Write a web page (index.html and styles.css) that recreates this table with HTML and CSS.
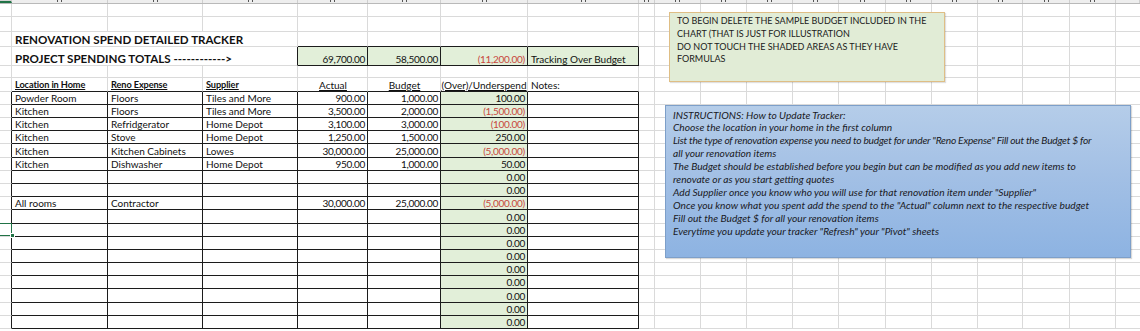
FILE: index.html
```html
<!DOCTYPE html>
<html lang="en">
<head>
<meta charset="utf-8">
<title>Renovation Spend Detailed Tracker</title>
<link rel="stylesheet" href="styles.css">
</head>
<body>
<div class="sheet">
  <div class="colhead">
    <div class="ch on"></div>
    <div class="ch mk"></div><div class="ch mk"></div><div class="ch mk"></div><div class="ch mk"></div>
    <div class="ch mk"></div><div class="ch mk"></div><div class="ch mk"></div><div class="ch mk"></div>
    <div class="ch mk"></div><div class="ch mk"></div><div class="ch mk"></div><div class="ch mk"></div>
    <div class="ch mk"></div><div class="ch mk"></div><div class="ch mk"></div><div class="ch mk"></div>
    <div class="ch mk"></div><div class="ch mk"></div><div class="ch"></div>
  </div>

  <div class="grid">
    <!-- row 1 -->
    <div class="c"></div><div class="c"></div><div class="c"></div><div class="c"></div><div class="c"></div><div class="c"></div><div class="c"></div><div class="c"></div><div class="c rest"></div>
    <!-- row 2 -->
    <div class="c"></div><div class="c"></div><div class="c"></div><div class="c"></div><div class="c"></div><div class="c"></div><div class="c"></div><div class="c"></div><div class="c rest"></div>
    <!-- row 3: title -->
    <div class="c"></div><div class="c span3 title">RENOVATION SPEND DETAILED TRACKER</div><div class="c tb"></div><div class="c tb"></div><div class="c tb"></div><div class="c tb"></div><div class="c rest"></div>
    <!-- row 4: totals -->
    <div class="c"></div><div class="c span3 title trt">PROJECT SPENDING TOTALS ------------&gt;</div><div class="c t g num">69,700.00</div><div class="c t g num">58,500.00</div><div class="c t g num neg">(11,200.00)</div><div class="c t g">Tracking Over Budget</div><div class="c rest"></div>
    <!-- row 5 -->
    <div class="c"></div><div class="c"></div><div class="c"></div><div class="c"></div><div class="c"></div><div class="c"></div><div class="c"></div><div class="c"></div><div class="c rest"></div>
    <!-- row 6: headers -->
    <div class="c"></div><div class="c tb hd">Location in Home</div><div class="c tb hd">Reno Expense</div><div class="c tb hd">Supplier</div><div class="c tb ctr"><u>Actual</u></div><div class="c tb ctr"><u>Budget</u></div><div class="c tb ctr tight"><u>(Over)/Underspend</u></div><div class="c tb">Notes:</div><div class="c rest"></div>

    <!-- data rows -->
    <div class="c tl"></div><div class="c t">Powder Room</div><div class="c t">Floors</div><div class="c t">Tiles and More</div><div class="c t num">900.00</div><div class="c t num">1,000.00</div><div class="c t num g">100.00</div><div class="c t"></div><div class="c rest"></div>
    <div class="c tl"></div><div class="c t">Kitchen</div><div class="c t">Floors</div><div class="c t">Tiles and More</div><div class="c t num">3,500.00</div><div class="c t num">2,000.00</div><div class="c t num g neg">(1,500.00)</div><div class="c t"></div><div class="c rest"></div>
    <div class="c tl"></div><div class="c t">Kitchen</div><div class="c t">Refridgerator</div><div class="c t">Home Depot</div><div class="c t num">3,100.00</div><div class="c t num">3,000.00</div><div class="c t num g neg">(100.00)</div><div class="c t"></div><div class="c rest"></div>
    <div class="c tl"></div><div class="c t">Kitchen</div><div class="c t">Stove</div><div class="c t">Home Depot</div><div class="c t num">1,250.00</div><div class="c t num">1,500.00</div><div class="c t num g">250.00</div><div class="c t"></div><div class="c rest"></div>
    <div class="c tl"></div><div class="c t">Kitchen</div><div class="c t">Kitchen Cabinets</div><div class="c t">Lowes</div><div class="c t num">30,000.00</div><div class="c t num">25,000.00</div><div class="c t num g neg">(5,000.00)</div><div class="c t"></div><div class="c rest"></div>
    <div class="c tl"></div><div class="c t">Kitchen</div><div class="c t">Dishwasher</div><div class="c t">Home Depot</div><div class="c t num">950.00</div><div class="c t num">1,000.00</div><div class="c t num g">50.00</div><div class="c t"></div><div class="c rest"></div>
    <div class="c tl"></div><div class="c t"></div><div class="c t"></div><div class="c t"></div><div class="c t num"></div><div class="c t num"></div><div class="c t num g">0.00</div><div class="c t"></div><div class="c rest"></div>
    <div class="c tl"></div><div class="c t"></div><div class="c t"></div><div class="c t"></div><div class="c t num"></div><div class="c t num"></div><div class="c t num g">0.00</div><div class="c t"></div><div class="c rest"></div>
    <div class="c tl"></div><div class="c t">All rooms</div><div class="c t">Contractor</div><div class="c t"></div><div class="c t num">30,000.00</div><div class="c t num">25,000.00</div><div class="c t num g neg">(5,000.00)</div><div class="c t"></div><div class="c rest"></div>
    <div class="c tl"></div><div class="c t"></div><div class="c t"></div><div class="c t"></div><div class="c t num"></div><div class="c t num"></div><div class="c t num g">0.00</div><div class="c t"></div><div class="c rest"></div>
    <div class="c tl"></div><div class="c t"></div><div class="c t"></div><div class="c t"></div><div class="c t num"></div><div class="c t num"></div><div class="c t num g">0.00</div><div class="c t"></div><div class="c rest"></div>
    <div class="c tl"></div><div class="c t"></div><div class="c t"></div><div class="c t"></div><div class="c t num"></div><div class="c t num"></div><div class="c t num g">0.00</div><div class="c t"></div><div class="c rest"></div>
    <div class="c tl"></div><div class="c t"></div><div class="c t"></div><div class="c t"></div><div class="c t num"></div><div class="c t num"></div><div class="c t num g">0.00</div><div class="c t"></div><div class="c rest"></div>
    <div class="c tl"></div><div class="c t"></div><div class="c t"></div><div class="c t"></div><div class="c t num"></div><div class="c t num"></div><div class="c t num g">0.00</div><div class="c t"></div><div class="c rest"></div>
    <div class="c tl"></div><div class="c t"></div><div class="c t"></div><div class="c t"></div><div class="c t num"></div><div class="c t num"></div><div class="c t num g">0.00</div><div class="c t"></div><div class="c rest"></div>
    <div class="c tl"></div><div class="c t"></div><div class="c t"></div><div class="c t"></div><div class="c t num"></div><div class="c t num"></div><div class="c t num g">0.00</div><div class="c t"></div><div class="c rest"></div>
    <div class="c tl"></div><div class="c t"></div><div class="c t"></div><div class="c t"></div><div class="c t num"></div><div class="c t num"></div><div class="c t num g">0.00</div><div class="c t"></div><div class="c rest"></div>
    <div class="c tl"></div><div class="c t"></div><div class="c t"></div><div class="c t"></div><div class="c t num"></div><div class="c t num"></div><div class="c t num g">0.00</div><div class="c t"></div><div class="c rest"></div>
  </div>

  <div class="selection"><span class="handle"></span></div>

  <div class="note-green">
    TO BEGIN DELETE THE SAMPLE BUDGET INCLUDED IN THE<br>
    CHART (THAT IS JUST FOR ILLUSTRATION<br>
    DO NOT TOUCH THE SHADED AREAS AS THEY HAVE<br>
    FORMULAS
  </div>

  <div class="note-blue">
    INSTRUCTIONS: How to Update Tracker:<br>
    Choose the location in your home in the first column<br>
    <span class="fit">List the type of renovation expense you need to budget for under "Reno Expense" Fill out the Budget $ for</span><br>
    all your renovation items<br>
    The Budget should be established before you begin but can be modified as you add new items to<br>
    renovate or as you start getting quotes<br>
    Add Supplier once you know who you will use for that renovation item under "Supplier"<br>
    Once you know what you spent add the spend to the "Actual" column next to the respective budget<br>
    Fill out the Budget $ for all your renovation items<br>
    Everytime you update your tracker "Refresh" your "Pivot" sheets
  </div>
</div>
</body>
</html>
```
FILE: styles.css
```css
html, body {
  margin: 0;
  padding: 0;
  background: #ffffff;
}

body {
  font-family: Lato, "Liberation Sans", Arial, sans-serif;
  font-size: 10px;
  color: #111111;
}

.sheet {
  position: relative;
  width: 1140px;
  height: 331px;
  overflow: hidden;
}

/* column header strip (mostly scrolled off) */
.colhead {
  display: grid;
  grid-template-columns: 12px 96px 95px 95px 70px 73px 87px 111px 16px 46px 46px 46px 46px 47px 46px 46px 45px 47px 46px 1fr;
  height: 4px;
  box-sizing: border-box;
  background: #eeeeee;
  border-bottom: 1px solid #b9b9b9;
  overflow: hidden;
}

.ch {
  border-right: 1px solid #cfcfcf;
}

/* bottoms of the column letters, cut off by the scroll position */
.mk {
  background-image: linear-gradient(#555, #555), linear-gradient(#555, #555);
  background-size: 1px 2px, 1px 2px;
  background-repeat: no-repeat;
  background-position: calc(50% - 2px) 0, calc(50% + 2px) 0;
}

.ch.on {
  background: #d3d3d3;
  border-bottom: 2px solid #217346;
}

/* cell grid */
.grid {
  display: grid;
  grid-template-columns: 12px 96px 95px 95px 70px 73px 87px 111px 1fr;
  grid-template-rows: 13.3px 14.4px 15.6px 18.4px 12.7px 13.3px repeat(18, 13.2px);
}

.c {
  box-sizing: border-box;
  display: flex;
  align-items: flex-end;
  min-width: 0;
  padding: 0 2px 0 3px;
  border-right: 1px solid #dadada;
  border-bottom: 1px solid #dadada;
  white-space: nowrap;
  overflow: hidden;
  line-height: 12px;
}

.span3 {
  grid-column: span 3;
}

.title {
  font-weight: 700;
  font-size: 11.6px;
  line-height: 13px;
}

.hd {
  font-weight: 700;
  font-size: 9.2px;
  letter-spacing: -0.1px;
  text-decoration: underline;
}

.ctr {
  justify-content: center;
}

.tight {
  padding: 0;
}

.num {
  justify-content: flex-end;
  padding-right: 2px;
  letter-spacing: -0.3px;
}

.neg {
  color: #c8473c;
}

.g {
  background: #e2efd9;
}

/* black table borders */
.t {
  border-right-color: #1c1c1c;
  border-bottom-color: #1c1c1c;
}

.tb {
  border-bottom-color: #1c1c1c;
}

.trt {
  border-right-color: #1c1c1c;
}

.tl {
  border-right-color: #1c1c1c;
}

/* columns H..T drawn as gridlines */
.rest {
  padding: 0;
  border-right: 0;
  background-image: linear-gradient(to right,
    transparent 15px, #dadada 15px 16px,
    transparent 16px 61px, #dadada 61px 62px,
    transparent 62px 107px, #dadada 107px 108px,
    transparent 108px 153px, #dadada 153px 154px,
    transparent 154px 199px, #dadada 199px 200px,
    transparent 200px 246px, #dadada 246px 247px,
    transparent 247px 292px, #dadada 292px 293px,
    transparent 293px 338px, #dadada 338px 339px,
    transparent 339px 383px, #dadada 383px 384px,
    transparent 384px 430px, #dadada 430px 431px,
    transparent 431px 476px, #dadada 476px 477px,
    transparent 477px);
}

/* active cell selection in the narrow column */
.selection {
  position: absolute;
  left: -4px;
  top: 222.5px;
  width: 16px;
  height: 13.4px;
  border: 1.5px solid #217346;
  box-sizing: border-box;
}

.handle {
  position: absolute;
  right: -3.5px;
  bottom: -3.5px;
  width: 5px;
  height: 5px;
  background: #217346;
  border: 1px solid #ffffff;
  box-sizing: border-box;
}

/* text boxes over the sheet */
.note-green {
  position: absolute;
  left: 669px;
  top: 11.5px;
  width: 276px;
  height: 70px;
  box-sizing: border-box;
  padding: 2.5px 6px 0 7px;
  background: #e1ecd6;
  border: 1.5px solid #dfbe85;
  box-shadow: 1px 1px 1px rgba(0, 0, 0, 0.12);
  font-size: 9px;
  line-height: 12.8px;
  color: #1a1a1a;
  white-space: nowrap;
}

.note-blue {
  position: absolute;
  left: 665px;
  top: 105px;
  width: 466px;
  height: 153px;
  box-sizing: border-box;
  padding: 2.5px 4px 0 7px;
  background: linear-gradient(to bottom, #b5cde9 0%, #a3c0e5 45%, #8db3e2 100%);
  border: 1px solid #7d9fc9;
  box-shadow: 1px 1px 1px rgba(0, 0, 0, 0.15);
  font-size: 10.2px;
  font-style: italic;
  line-height: 12.96px;
  color: #1a1a24;
  white-space: nowrap;
}

.fit {
  letter-spacing: -0.22px;
}
```
